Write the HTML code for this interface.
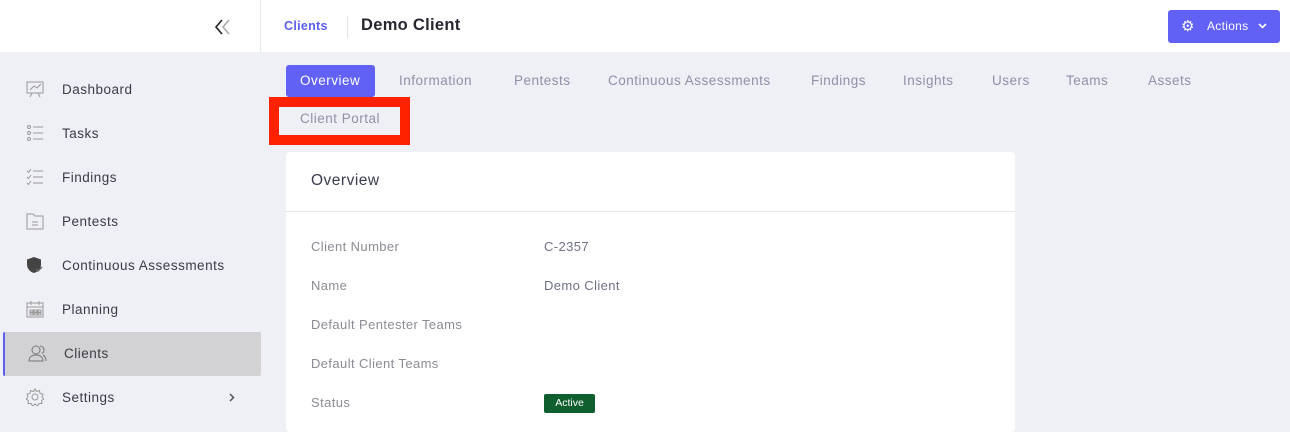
<!DOCTYPE html>
<html><head><meta charset="utf-8"><style>
*{margin:0;padding:0;box-sizing:border-box}
body{width:1290px;height:426px;overflow:hidden;background:#eff0f5;font-family:"Liberation Sans",sans-serif;position:relative}
.a{position:absolute;white-space:nowrap}
.top{left:0;top:0;width:1290px;height:52px;background:#fff}
.side{font-size:13.5px;color:#3a3b45;left:62px;letter-spacing:.5px}
.tab{top:73px;font-size:13.5px;color:#8e90a8;letter-spacing:.5px}
.lbl{left:311px;font-size:13px;color:#8b8c94;letter-spacing:.4px}
.val{left:544px;font-size:13px;color:#6f7185;letter-spacing:.4px}
svg{position:absolute}
</style></head><body>
<div class="a top"></div>
<div class="a" style="left:260px;top:0;width:1px;height:52px;background:#e6e8ef"></div>
<svg style="left:214px;top:19px" width="18" height="16" fill="none" stroke-width="1.6"><path d="M8 1L2 8l6 7" stroke="#222"/><path d="M15 1L9 8l6 7" stroke="#aaa"/></svg>
<div class="a" style="left:284px;top:19px;font-size:12.5px;font-weight:bold;color:#5b5ef0;letter-spacing:.3px">Clients</div>
<div class="a" style="left:347px;top:16px;width:1px;height:22px;background:#e0e0e6"></div>
<div class="a" style="left:361px;top:16px;font-size:16.5px;font-weight:bold;color:#26272f;letter-spacing:.3px">Demo Client</div>
<div class="a" style="left:1168px;top:10px;width:112px;height:33px;background:#6161f5;border-radius:3px"></div>
<div class="a" style="left:1181px;top:17px;font-size:15px;color:#fff">&#9881;</div>
<div class="a" style="left:1207px;top:19px;font-size:12px;color:#fff;letter-spacing:.3px">Actions</div>
<svg style="left:1258px;top:23px" width="9" height="6" fill="none" stroke="#fff" stroke-width="1.6"><path d="M1 1l3.5 3.5L8 1"/></svg>

<div class="a" style="left:3px;top:332px;width:258px;height:44px;background:#d2d2d4;border-radius:2px;border-left:2px solid #5b5ef0"></div>
<div class="a side" style="top:82px">Dashboard</div>
<div class="a side" style="top:126px">Tasks</div>
<div class="a side" style="top:170px">Findings</div>
<div class="a side" style="top:214px">Pentests</div>
<div class="a side" style="top:258px">Continuous Assessments</div>
<div class="a side" style="top:302px">Planning</div>
<div class="a side" style="top:346px;left:64px">Clients</div>
<div class="a side" style="top:390px">Settings</div>
<svg style="left:229px;top:393px" width="6" height="9" fill="none" stroke="#555" stroke-width="1.5"><path d="M1 1l3.5 3.5L1 8"/></svg>
<svg style="left:26px;top:80px" width="18" height="18" fill="none" stroke="#999" stroke-width="1"><rect x="1" y="2" width="16" height="11"/><path d="M4 10l4-4 3 2 4-4M6 13l-2 4M12 13l2 4"/></svg>
<svg style="left:26px;top:124px" width="18" height="18" fill="none" stroke="#999"><circle cx="3" cy="3" r="1.5"/><circle cx="3" cy="9" r="1.5"/><circle cx="3" cy="15" r="1.5"/><path d="M7 3h10M7 9h10M7 15h10"/></svg>
<svg style="left:26px;top:168px" width="18" height="18" fill="none" stroke="#999"><path d="M1 3l1.5 1.5L5 1M1 9l1.5 1.5L5 7M1 15l1.5 1.5L5 13M7 3h10M7 9h10M7 15h10"/></svg>
<svg style="left:26px;top:212px" width="18" height="18" fill="none" stroke="#999"><path d="M1 2h6l2 2h8v13H1z M6 10h6M6 13h6"/></svg>
<svg style="left:26px;top:256px" width="18" height="18"><path d="M8 1l7 2.5v5c0 4-3 7.5-7 8.5-4-1-7-4.5-7-8.5v-5z" fill="#444"/><path d="M10 13l2 2 4-4" stroke="#666" fill="none" stroke-width="1.5"/></svg>
<svg style="left:26px;top:300px" width="18" height="18" fill="none" stroke="#999"><rect x="1" y="3" width="16" height="14"/><path d="M5 1v4M13 1v4M1 7h16M4 10h3v2H4zM8 10h3v2H8zM12 10h3v2h-3zM4 13h3v2H4zM8 13h3v2H8zM12 13h3v2h-3z"/></svg>
<svg style="left:28px;top:344px" width="20" height="18" fill="none" stroke="#777"><circle cx="8" cy="6" r="4"/><path d="M1 17c0-4 3-6 7-6s7 2 7 6z"/><path d="M12 2c2.5 0 4 2 4 4s-1 3-2 3.5M15 11c2 1 3 3 3 6"/></svg>
<svg style="left:26px;top:388px" width="18" height="18" fill="none" stroke="#999"><circle cx="9" cy="9" r="3"/><path d="M9 1l1.5 2.5 3-1 .5 3 3 .5-1 3 2 2-2.5 1.5.5 3-3 0-1.5 2.5L9 16l-2.5 2-1.5-2.5-3 0 .5-3L0 11l2-2-1-3 3-.5.5-3 3 1z"/></svg>

<div class="a" style="left:286px;top:65px;width:89px;height:32px;background:#6161f5;border-radius:3px"></div>
<div class="a tab" style="left:300px;color:#fff">Overview</div>
<div class="a tab" style="left:399px">Information</div>
<div class="a tab" style="left:514px">Pentests</div>
<div class="a tab" style="left:608px">Continuous Assessments</div>
<div class="a tab" style="left:811px">Findings</div>
<div class="a tab" style="left:903px">Insights</div>
<div class="a tab" style="left:992px">Users</div>
<div class="a tab" style="left:1066px">Teams</div>
<div class="a tab" style="left:1148px">Assets</div>
<div class="a" style="left:269px;top:97px;width:141px;height:48px;border:10px solid #ff2200;background:#eff0f5"></div>
<div class="a tab" style="left:300px;top:111px">Client Portal</div>

<div class="a" style="left:286px;top:152px;width:729px;height:280px;background:#fff;border-radius:4px"></div>
<div class="a" style="left:286px;top:211px;width:729px;height:1px;background:#e6e7ec"></div>
<div class="a" style="left:311px;top:172px;font-size:15.5px;color:#3a3b4d;letter-spacing:.5px">Overview</div>
<div class="a lbl" style="top:239px">Client Number</div>
<div class="a val" style="top:239px">C-2357</div>
<div class="a lbl" style="top:278px">Name</div>
<div class="a val" style="top:278px">Demo Client</div>
<div class="a lbl" style="top:317px">Default Pentester Teams</div>
<div class="a lbl" style="top:356px">Default Client Teams</div>
<div class="a lbl" style="top:395px">Status</div>
<div class="a" style="left:544px;top:394px;width:51px;height:19px;background:#0f5e2e;border-radius:2px;color:#fff;font-size:10.5px;text-align:center;line-height:19px">Active</div>
</body></html>
